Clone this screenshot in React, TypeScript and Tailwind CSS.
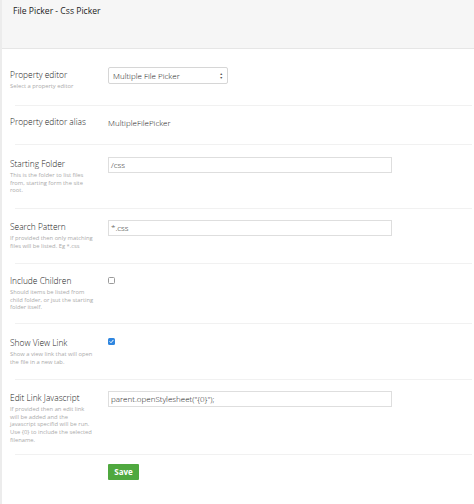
// File Picker - Css Picker settings panel

type Row = {
  label: string;
  desc?: string[];
  height: string;
  control: React.ReactNode;
};

function TextInput({ value }: { value: string }) {
  return (
    <div className="mt-px flex h-[16px] w-[284px] items-center border border-[#dedede] bg-white px-[2px] text-[8px] font-light text-[#222]">
      {value}
    </div>
  );
}

function Checkbox({ checked }: { checked?: boolean }) {
  if (checked) {
    return (
      <div className="mt-[3px] flex h-[7px] w-[7px] items-center justify-center rounded-[1.5px] bg-[#2f86e0]">
        <svg viewBox="0 0 8 8" className="h-[5px] w-[5px]" fill="none" stroke="white" strokeWidth={1.6}>
          <path d="M1.5 4.2 3.2 6 6.6 2" strokeLinecap="round" strokeLinejoin="round" />
        </svg>
      </div>
    );
  }
  return <div className="mt-[4px] h-[7px] w-[7px] rounded-[1.5px] border border-[#9a9a9a] bg-white" />;
}

export default function App() {
  const rows: Row[] = [
    {
      label: "Property editor",
      desc: ["Select a property editor"],
      height: "h-[56px] pt-[18px]",
      control: (
        <div className="flex h-[17px] w-[120px] items-center justify-between rounded-[2px] border border-[#d6d6d6] bg-white pl-[4px] pr-[4px] text-[8px] font-light text-[#222]">
          <span>Multiple File Picker</span>
          <span className="flex flex-col text-[3.5px] leading-[4px] text-[#555]">
            <span>▲</span>
            <span>▼</span>
          </span>
        </div>
      ),
    },
    {
      label: "Property editor alias",
      height: "h-[38px] pt-[8px]",
      control: <div className="pt-[3px] text-[8px] font-light text-[#222]">MultipleFilePicker</div>,
    },
    {
      label: "Starting Folder",
      desc: ["This is the folder to list files", "from, starting form the site", "root."],
      height: "h-[63px] pt-[11px]",
      control: <TextInput value="/css" />,
    },
    {
      label: "Search Pattern",
      desc: ["If provided then only matching", "files will be listed. Eg *.css"],
      height: "h-[54px] pt-[10px]",
      control: <TextInput value="*.css" />,
    },
    {
      label: "Include Children",
      desc: ["Should items be listed from", "child folder, or jsut the starting", "folder itself."],
      height: "h-[59px] pt-[9px]",
      control: <Checkbox />,
    },
    {
      label: "Show View Link",
      desc: ["Show a view link that will open", "the file in a new tab."],
      height: "h-[55px] pt-[11px]",
      control: <Checkbox checked />,
    },
    {
      label: "Edit Link Javascript",
      desc: [
        "If provided then an edit link",
        "will be added and the",
        "javascript specifid will be run.",
        "Use {0} to include the selected",
        "filename.",
      ],
      height: "h-[74px] pt-[10px]",
      control: <TextInput value={'parent.openStylesheet("{0}");'} />,
    },
  ];

  return (
    <div className="flex h-[504px] w-[474px] flex-col overflow-hidden border-l-[2px] border-[#ececec] bg-white font-['Open_Sans',sans-serif]">
      <header className="h-[49px] shrink-0 border-b border-[#e6e6e6] bg-[#f6f6f6] pl-[11px] pt-[5px] text-[8.6px] text-[#222]">
        File Picker - Css Picker
      </header>

      {rows.map((r) => (
        <div key={r.label}>
          <div className={`flex pl-[8px] ${r.height}`}>
            <div className="w-[98px] shrink-0">
              <div className="text-[8.4px] font-light leading-[16px] text-[#222]">{r.label}</div>
              {r.desc && (
                <div className="text-[5.8px] leading-[7.7px] text-[#aaa]">
                  {r.desc.map((d) => (
                    <div key={d}>{d}</div>
                  ))}
                </div>
              )}
            </div>
            <div>{r.control}</div>
          </div>
          <div className="ml-[13px] mr-[2px] h-px bg-[#f1f1f1]" />
        </div>
      ))}

      <div className="pl-[106px] pt-[2px]">
        <button className="h-[16px] w-[31px] rounded-[1px] bg-[#4fa83f] text-[8px] font-bold text-white">
          Save
        </button>
      </div>
    </div>
  );
}
